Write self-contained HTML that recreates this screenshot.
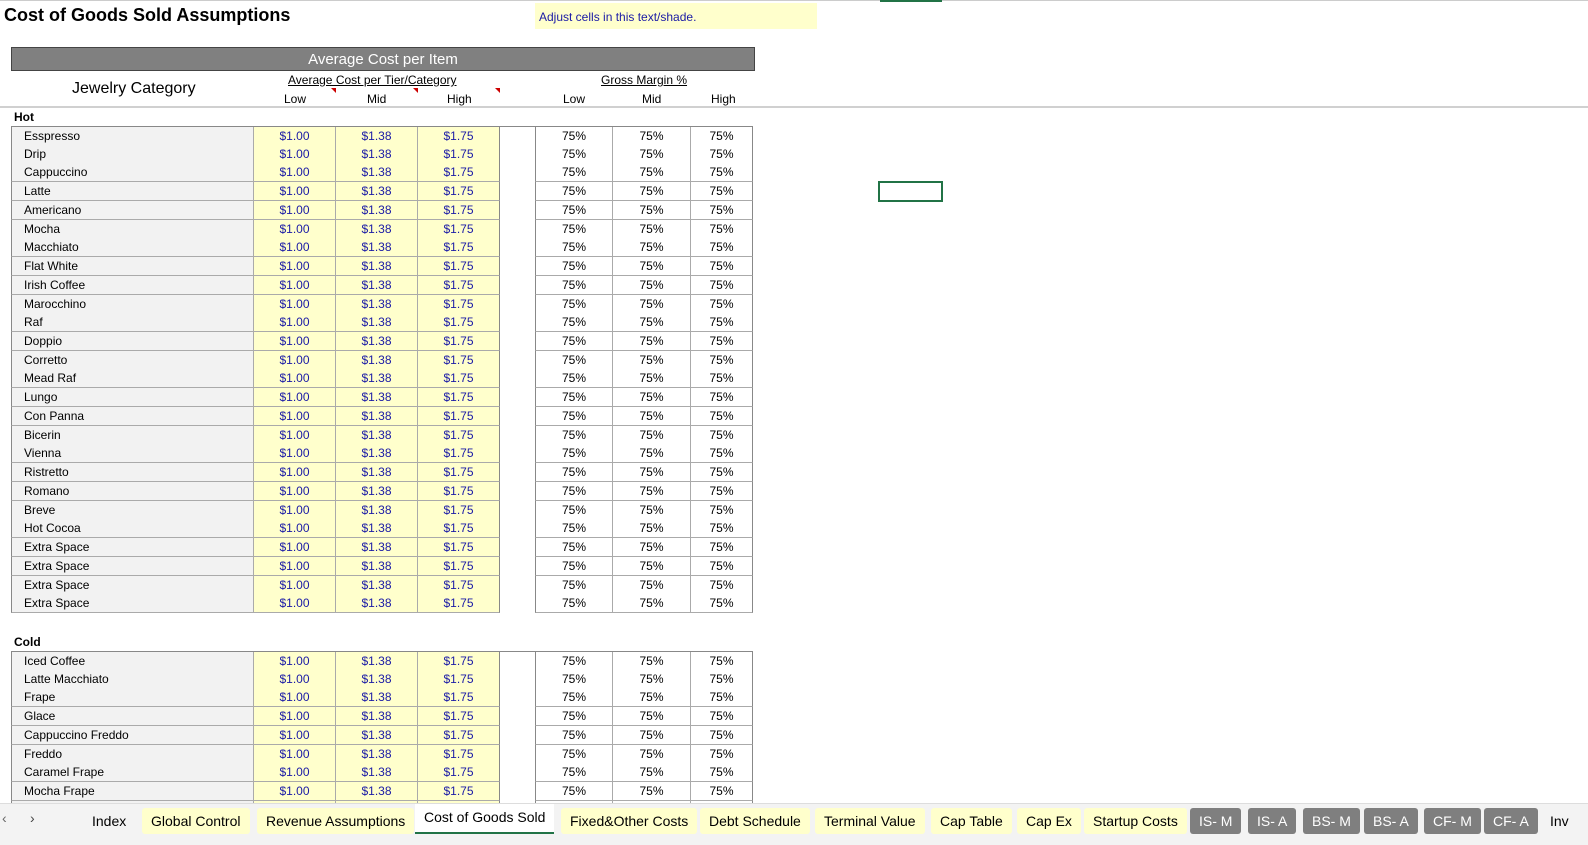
<!DOCTYPE html>
<html><head><meta charset="utf-8"><style>
*{margin:0;padding:0;box-sizing:border-box}
body{width:1588px;height:845px;overflow:hidden;background:#fff;font-family:"Liberation Sans",sans-serif;font-size:12px;color:#000;position:relative}
.a{position:absolute;white-space:nowrap}
.r{position:absolute;left:11px;height:19px;display:flex}
.r div{height:19px;line-height:18px;border:1px solid #aaa;border-top:none;border-left:none}
.l{width:243px;background:#f2f2f2;padding-left:12px;border-left:1px solid #888 !important}
.c{width:82px;background:#ffffcc;color:#1a1aa6;text-align:center}
.g{width:35px;border:none !important}
.m{width:78px;text-align:center;background:#fff}
.m1{border-left:1px solid #888 !important}
.tab{position:absolute;top:808px;height:26px;line-height:26px;font-size:14px;padding:0 9px;border-radius:3px}
.y{background:#ffffcc}
.k{background:#7f7f7f;color:#fff}
</style></head><body>
<div class="a" style="left:0;top:0;width:1588px;height:1px;background:#ccc"></div>
<div class="a" style="left:880px;top:0;width:62px;height:2px;background:#217346"></div>
<div class="a" style="left:4px;top:5px;font-size:18px;font-weight:bold">Cost of Goods Sold Assumptions</div>
<div class="a" style="left:535px;top:3px;width:282px;height:26px;background:#ffffcc;color:#1a1aa6;line-height:28px;padding-left:4px;font-size:12px">Adjust cells in this text/shade.</div>
<div class="a" style="left:11px;top:47px;width:744px;height:24px;background:#808080;border:1px solid #444;color:#fff;text-align:center;font-size:15px;line-height:23px">Average Cost per Item</div>
<div class="a" style="left:72px;top:80px;font-size:16px">Jewelry Category</div>
<div class="a" style="left:288px;top:73px;text-decoration:underline">Average Cost per Tier/Category</div>
<div class="a" style="left:601px;top:73px;text-decoration:underline">Gross Margin %</div>
<div class="a" style="left:284px;top:92px">Low</div>
<div class="a" style="left:367px;top:92px">Mid</div>
<div class="a" style="left:447px;top:92px">High</div>
<div class="a" style="left:563px;top:92px">Low</div>
<div class="a" style="left:642px;top:92px">Mid</div>
<div class="a" style="left:711px;top:92px">High</div>
<div class="a" style="left:331px;top:88px;border-top:5px solid #c00;border-left:5px solid transparent"></div>
<div class="a" style="left:413px;top:88px;border-top:5px solid #c00;border-left:5px solid transparent"></div>
<div class="a" style="left:495px;top:88px;border-top:5px solid #c00;border-left:5px solid transparent"></div>
<div class="a" style="left:0;top:106px;width:1588px;height:2px;background:#d0d0d0"></div>
<div class="a" style="left:14px;top:110px;font-weight:bold">Hot</div>
<div class="a" style="left:14px;top:635px;font-weight:bold">Cold</div>
<div class="a" style="left:878px;top:181px;width:65px;height:21px;border:2px solid #217346"></div>
<div id="rows"></div>
<script>
var hot=["Esspresso","Drip","Cappuccino","Latte","Americano","Mocha","Macchiato","Flat White","Irish Coffee","Marocchino","Raf","Doppio","Corretto","Mead Raf","Lungo","Con Panna","Bicerin","Vienna","Ristretto","Romano","Breve","Hot Cocoa","Extra Space","Extra Space","Extra Space","Extra Space"];
var cold=["Iced Coffee","Latte Macchiato","Frape","Glace","Cappuccino Freddo","Freddo","Caramel Frape","Mocha Frape",""];
var h="";
function row(n,y,first){h+='<div class="r" style="top:'+y+'px;'+(first?'border-top:1px solid #888;':'')+'"><div class="l">'+n+'</div><div class="c">$1.00</div><div class="c">$1.38</div><div class="c" style="border-right:1px solid #888">$1.75</div><div class="g"></div><div class="m m1">75%</div><div class="m">75%</div><div class="m" style="width:62px;border-right:1px solid #888">75%</div></div>';}
hot.forEach(function(n,i){row(n,Math.round(126+i*18.73),i==0)});
cold.forEach(function(n,i){row(n,Math.round(651+i*18.73),i==0)});
document.getElementById("rows").innerHTML=h;
</script>
<div class="a" style="left:0;top:803px;width:1588px;height:42px;background:#f3f3f3;border-top:1px solid #ddd"></div>
<div class="a" style="left:2px;top:810px;font-size:14px;color:#666">&lsaquo;</div>
<div class="a" style="left:30px;top:810px;font-size:14px;color:#444">&rsaquo;</div>
<div class="tab" style="left:83px">Index</div>
<div class="tab y" style="left:142px">Global Control</div>
<div class="tab y" style="left:257px">Revenue Assumptions</div>
<div class="tab" style="left:415px;top:804px;height:30px;background:#fff;border-bottom:2px solid #217346;border-radius:0">Cost of Goods Sold</div>
<div class="tab y" style="left:561px">Fixed&amp;Other Costs</div>
<div class="tab y" style="left:700px">Debt Schedule</div>
<div class="tab y" style="left:815px">Terminal Value</div>
<div class="tab y" style="left:931px">Cap Table</div>
<div class="tab y" style="left:1017px">Cap Ex</div>
<div class="tab y" style="left:1084px">Startup Costs</div>
<div class="tab k" style="left:1190px">IS- M</div>
<div class="tab k" style="left:1248px">IS- A</div>
<div class="tab k" style="left:1303px">BS- M</div>
<div class="tab k" style="left:1364px">BS- A</div>
<div class="tab k" style="left:1424px">CF- M</div>
<div class="tab k" style="left:1484px">CF- A</div>
<div class="tab" style="left:1541px">Inv</div>
</body></html>
